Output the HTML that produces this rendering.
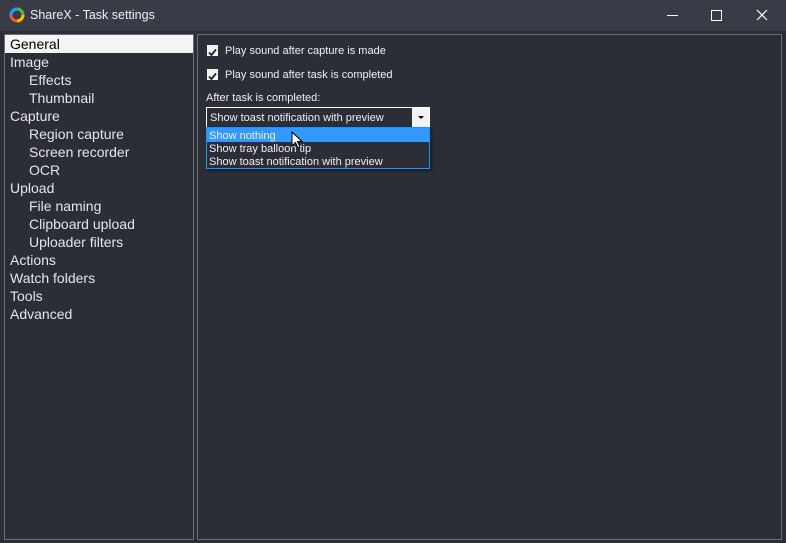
<!DOCTYPE html><html><head><style>
body{margin:0;width:786px;height:543px;background:#2b2e37;font-family:"Liberation Sans",sans-serif;overflow:hidden;position:relative;color:#e6e6e6}
.tb{position:absolute;left:0;top:0;width:786px;height:31px;background:#393c46}
.tb .t{position:absolute;left:30px;top:8px;font-size:12.5px;color:#f0f0f0}
.p{position:absolute;border:1px solid #6b6e75;background:#2b2e37}
.it{position:absolute;left:0px;width:188px;height:18px;font-size:14px;line-height:18px}
.cb{position:absolute;width:11px;height:11px;background:#f2f2f2}
.s{position:absolute;font-size:11px;color:#f0f0f0}
</style></head><body>
<div class="tb">
<svg style="position:absolute;left:9px;top:7px" width="16" height="16" viewBox="0 0 16 16"><circle cx="8" cy="8" r="6" fill="none" stroke="#e53" stroke-width="3"/><path d="M8 2a6 6 0 0 1 6 6" stroke="#4b4" stroke-width="3" fill="none"/><path d="M14 8a6 6 0 0 1-6 6" stroke="#fb0" stroke-width="3" fill="none"/><path d="M2 8a6 6 0 0 1 6-6" stroke="#29f" stroke-width="3" fill="none"/></svg>
<div class="t">ShareX - Task settings</div>
<div style="position:absolute;left:667px;top:15px;width:11px;height:1px;background:#fff"></div>
<div style="position:absolute;left:711px;top:10px;width:9px;height:9px;border:1px solid #fff"></div>
<svg style="position:absolute;left:756px;top:9px" width="12" height="12"><path d="M1 1L11 11M11 1L1 11" stroke="#fff" stroke-width="1.2"/></svg>
</div>
<div class="p" style="left:4px;top:34px;width:188px;height:504px">
<div class="it" style="top:0px;background:#f4f4f4;color:#000;padding-left:5px;width:183px">General</div>
<div class="it" style="top:18px;padding-left:5px">Image</div>
<div class="it" style="top:36px;padding-left:24px">Effects</div>
<div class="it" style="top:54px;padding-left:24px">Thumbnail</div>
<div class="it" style="top:72px;padding-left:5px">Capture</div>
<div class="it" style="top:90px;padding-left:24px">Region capture</div>
<div class="it" style="top:108px;padding-left:24px">Screen recorder</div>
<div class="it" style="top:126px;padding-left:24px">OCR</div>
<div class="it" style="top:144px;padding-left:5px">Upload</div>
<div class="it" style="top:162px;padding-left:24px">File naming</div>
<div class="it" style="top:180px;padding-left:24px">Clipboard upload</div>
<div class="it" style="top:198px;padding-left:24px">Uploader filters</div>
<div class="it" style="top:216px;padding-left:5px">Actions</div>
<div class="it" style="top:234px;padding-left:5px">Watch folders</div>
<div class="it" style="top:252px;padding-left:5px">Tools</div>
<div class="it" style="top:270px;padding-left:5px">Advanced</div>
</div>
<div class="p" style="left:197px;top:34px;width:583px;height:504px"></div>
<div class="cb" style="left:207px;top:45px"><svg width="11" height="11"><path d="M2 5.5L4.5 8L9 2.5" stroke="#222" stroke-width="1.8" fill="none"/></svg></div>
<div class="s" style="left:225px;top:45px">Play sound after capture is made</div>
<div class="cb" style="left:207px;top:69px"><svg width="11" height="11"><path d="M2 5.5L4.5 8L9 2.5" stroke="#222" stroke-width="1.8" fill="none"/></svg></div>
<div class="s" style="left:225px;top:69px">Play sound after task is completed</div>
<div class="s" style="left:206px;top:92px">After task is completed:</div>
<div style="position:absolute;left:206px;top:107px;width:222px;height:20px;border:1px solid #fff;background:#2b2e37"></div>
<div class="s" style="left:210px;top:112px">Show toast notification with preview</div>
<div style="position:absolute;left:412px;top:108px;width:17px;height:19px;background:#f2f2f2"></div>
<div style="position:absolute;left:418px;top:116px;border-left:3px solid transparent;border-right:3px solid transparent;border-top:3px solid #000"></div>
<div style="position:absolute;left:206px;top:127px;width:222px;height:40px;border:1px solid #1e90ff;background:#2b2e37;box-shadow:2px 2px 3px rgba(0,0,0,.4)"></div>
<div style="position:absolute;left:207px;top:128px;width:222px;height:14px;background:#3399ff"></div>
<div class="s" style="left:209px;top:130px">Show nothing</div>
<div class="s" style="left:209px;top:143px">Show tray balloon tip</div>
<div class="s" style="left:209px;top:156px">Show toast notification with preview</div>
<svg style="position:absolute;left:291px;top:131px" width="12" height="19"><path d="M1 1V15L4.5 11.5L7 17L9 16L6.5 10.5H11Z" fill="#fff" stroke="#000"/></svg>
</body></html>
